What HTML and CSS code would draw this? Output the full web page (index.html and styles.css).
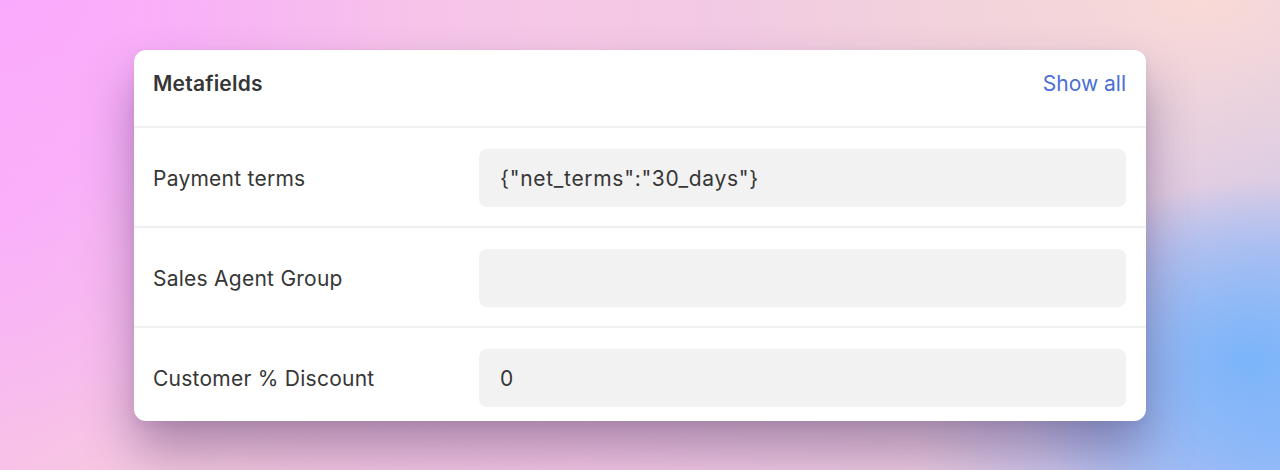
FILE: index.html
```html
<!DOCTYPE html>
<html lang="en">
<head>
<meta charset="utf-8">
<title>Metafields</title>
<link rel="stylesheet" href="styles.css">
</head>
<body>
<main class="stage">
  <section class="card">
    <header class="card-header">
      <h2 class="card-title">Metafields</h2>
      <a class="show-all" href="#">Show all</a>
    </header>
    <div class="row">
      <div class="label">Payment terms</div>
      <div class="field">{"net_terms":"30_days"}</div>
    </div>
    <div class="row">
      <div class="label">Sales Agent Group</div>
      <div class="field"></div>
    </div>
    <div class="row last">
      <div class="label">Customer % Discount</div>
      <div class="field">0</div>
    </div>
  </section>
</main>
</body>
</html>
```

FILE: styles.css
```css
html, body {
  margin: 0;
  padding: 0;
}

body {
  width: 1280px;
  height: 470px;
  overflow: hidden;
  font-family: Inter, "Noto Sans", "Liberation Sans", sans-serif;
  background-color: #f2c6e4;
  background-image:
    radial-gradient(ellipse 240px 180px at 1250px 360px, rgba(120,180,250,0.95), rgba(120,180,250,0) 100%),
    radial-gradient(ellipse 360px 260px at 1280px 440px, rgba(150,185,250,0.9), rgba(150,185,250,0) 100%),
    radial-gradient(ellipse 420px 260px at 0px 0px, rgba(250,170,252,1), rgba(250,170,252,0) 100%),
    radial-gradient(ellipse 300px 380px at 0px 200px, rgba(250,175,250,0.9), rgba(250,175,250,0) 100%),
    radial-gradient(ellipse 500px 250px at 1200px 0px, rgba(250,218,215,1), rgba(250,218,215,0) 100%),
    radial-gradient(ellipse 500px 300px at 100px 470px, rgba(246,205,220,1), rgba(246,205,220,0) 100%),
    linear-gradient(90deg, #f6b8f2 0%, #f6c8e6 45%, #ebcbe0 75%, #d2c8e8 100%);
}

.stage {
  display: flex;
  padding: 50px 0 0 134px;
}

.card {
  width: 1012px;
  height: 371px;
  overflow: hidden;
  background: #ffffff;
  border-radius: 12px;
  box-shadow: 0 30px 50px rgba(70, 45, 95, 0.42), 0 4px 10px rgba(70, 50, 100, 0.08);
}

.card-header {
  box-sizing: content-box;
  height: 55px;
  display: flex;
  align-items: flex-start;
  justify-content: space-between;
  padding: 21px 20px 0 19px;
  border-bottom: 2px solid #f0f0f0;
}

.card-title {
  margin: 0;
  font-size: 21px;
  line-height: 26px;
  font-weight: 600;
  color: #363636;
  letter-spacing: 0.2px;
}

.show-all {
  font-size: 21px;
  line-height: 26px;
  color: #4a6fd4;
  text-decoration: none;
}

.row {
  height: 77px;
  display: flex;
  align-items: flex-start;
  padding: 21px 20px 0 19px;
  border-bottom: 2px solid #f0f0f0;
}

.row .label {
  width: 326px;
  height: 58px;
  flex: none;
  display: flex;
  align-items: center;
  font-size: 21px;
  letter-spacing: 0.25px;
  color: #363636;
}

.row .field {
  flex: 1;
  height: 58px;
  box-sizing: border-box;
  padding: 0 21px;
  display: flex;
  align-items: center;
  background: #f2f2f2;
  border-radius: 8px;
  font-size: 21px;
  letter-spacing: 0.7px;
  color: #363636;
}

.row.last {
  border-bottom: none;
}
```
